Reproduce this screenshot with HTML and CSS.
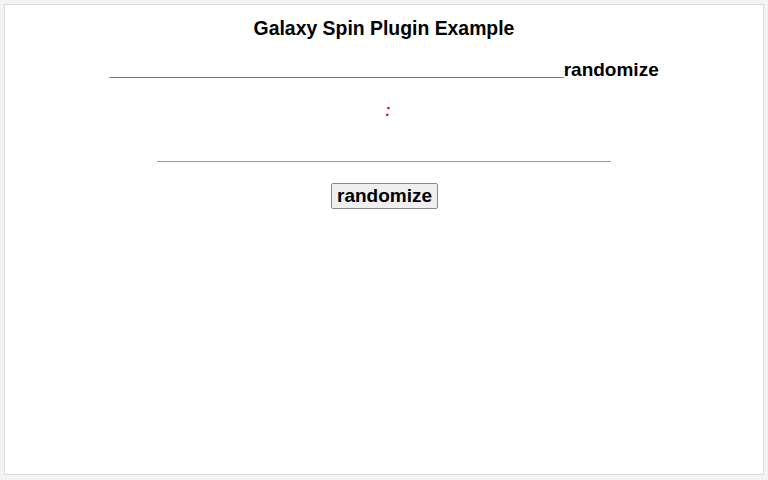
FILE: index.html
```html
<!DOCTYPE html>
<html>
<head>
<meta charset="utf-8">
<link rel="stylesheet" href="styles.css">
</head>
<body>
<div class="page">
  <h1 class="title">Galaxy Spin Plugin Example</h1>
  <div class="spin-line">___________________________________________randomize</div>
  <div class="result"><span class="colon">:</span></div>
  <hr class="rule">
  <div class="actions"><button class="btn">randomize</button></div>
</div>
</body>
</html>
```
FILE: styles.css
```css
html, body {
  margin: 0;
  padding: 0;
  background: #f3f3f3;
}
body {
  padding: 4px 4px 5px 4px;
  font-family: "Liberation Sans", Arial, sans-serif;
}
.page {
  background: #fff;
  border: 1px solid #dcdcdc;
  box-sizing: border-box;
  height: 471px;
  text-align: center;
  color: #000;
}
.title {
  font-size: 19.4px;
  font-weight: bold;
  line-height: 22px;
  margin: 12px 0 0 0;
}
.spin-line {
  font-size: 19px;
  font-weight: bold;
  line-height: 22px;
  margin-top: 20px;
}
.result {
  margin-top: 18px;
  height: 22px;
  line-height: 22px;
  padding-left: 8px;
}
.colon {
  color: #f0001c;
  font-size: 16px;
  font-weight: bold;
  font-style: italic;
  position: relative;
  top: 1px;
}
.rule {
  width: 454px;
  margin: 40px auto 0 auto;
  border: 0;
  border-top: 1px solid #9a9a9a;
  height: 0;
}
.actions {
  margin-top: 21px;
  padding-left: 1px;
}
.btn {
  font-family: "Liberation Sans", Arial, sans-serif;
  font-size: 19px;
  font-weight: bold;
  line-height: 22px;
  padding: 1px 5px;
  border: 1px solid #8a8a8a;
  border-radius: 2px;
  background: #efefef;
  color: #000;
}
```
